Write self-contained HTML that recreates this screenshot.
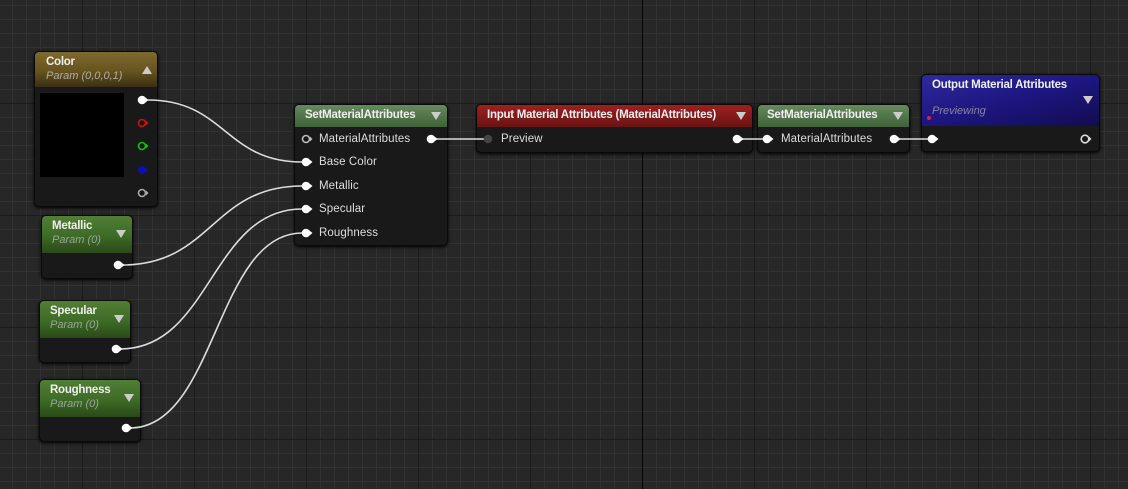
<!DOCTYPE html>
<html><head><meta charset="utf-8"><style>
*{margin:0;padding:0;box-sizing:border-box}
body{width:1128px;height:489px;overflow:hidden;position:relative;font-family:"Liberation Sans",sans-serif;
background-color:#272727;
background-image:
linear-gradient(90deg,transparent 642px,#050505 642px,#050505 643px,transparent 643px),
repeating-linear-gradient(90deg,transparent 0 82px,#1b1b1b 82px 83px,transparent 83px 112px),
repeating-linear-gradient(180deg,transparent 0 103px,#1b1b1b 103px 104px,transparent 104px 112px),
repeating-linear-gradient(90deg,transparent 0 12px,#323232 12px 13px,transparent 13px 14px),
repeating-linear-gradient(180deg,transparent 0 5px,#323232 5px 6px,transparent 6px 14px);}
.n{position:absolute;background:#191919;border-radius:5px;box-shadow:0 1px 3px #000;border:1px solid #0a0a0a;overflow:hidden}
.h{position:absolute;left:0;right:0;top:0;color:#eee;font-weight:bold;font-size:11.5px;letter-spacing:-0.25px;padding:4px 10px}
.sub{font-style:italic;font-weight:normal;opacity:.75;font-size:11px;margin-top:2px;letter-spacing:0}
.tri{position:absolute;width:0;height:0;border-left:5px solid transparent;border-right:5px solid transparent;border-top:8px solid #ccc}
.tx{position:absolute;color:#ddd;font-size:11.5px;letter-spacing:0.1px}
</style></head><body>

<div class="n" style="left:34px;top:51px;width:124px;height:156px">
 <div class="h" style="height:35px;background:linear-gradient(180deg,#7e6a2e,#66531f 55%,#3a3012);padding-left:11px">Color<div class="sub" style="color:#ccc">Param (0,0,0,1)</div></div>
 <div style="position:absolute;top:14px;right:5px;width:0;height:0;border-left:5px solid transparent;border-right:5px solid transparent;border-bottom:8px solid #ccc"></div>
 <div style="position:absolute;left:5px;top:41px;width:84px;height:84px;background:#000"></div>
</div>

<div class="n" style="left:41px;top:215px;width:92px;height:64px">
 <div class="h" style="height:37px;background:linear-gradient(180deg,#527f34,#3d6a26 55%,#2a4a18)">Metallic<div class="sub" style="color:#bbb">Param (0)</div></div>
 <div class="tri" style="right:6px;top:14px"></div></div>
<div class="n" style="left:39px;top:300px;width:92px;height:63px">
 <div class="h" style="height:37px;background:linear-gradient(180deg,#527f34,#3d6a26 55%,#2a4a18)">Specular<div class="sub" style="color:#bbb">Param (0)</div></div>
 <div class="tri" style="right:6px;top:14px"></div></div>
<div class="n" style="left:39px;top:379px;width:102px;height:63px">
 <div class="h" style="height:37px;background:linear-gradient(180deg,#527f34,#3d6a26 55%,#2a4a18)">Roughness<div class="sub" style="color:#bbb">Param (0)</div></div>
 <div class="tri" style="right:6px;top:14px"></div></div>

<div class="n" style="left:294px;top:104px;width:154px;height:142px">
 <div class="h" style="height:22px;background:linear-gradient(180deg,#658a5d,#3f6238);padding-left:10px">SetMaterialAttributes</div>
 <div class="tri" style="right:6px;top:7px"></div>
 <div class="tx" style="left:24px;top:28px">MaterialAttributes</div>
 <div class="tx" style="left:24px;top:51px">Base Color</div>
 <div class="tx" style="left:24px;top:75px">Metallic</div>
 <div class="tx" style="left:24px;top:98px">Specular</div>
 <div class="tx" style="left:24px;top:122px">Roughness</div>
</div>

<div class="n" style="left:476px;top:104px;width:277px;height:49px">
 <div class="h" style="height:22px;background:linear-gradient(180deg,#9e2020,#6a1414);padding-left:10px">Input Material Attributes (MaterialAttributes)</div>
 <div class="tri" style="right:6px;top:7px"></div>
 <div class="tx" style="left:24px;top:28px">Preview</div>
</div>

<div class="n" style="left:757px;top:104px;width:153px;height:49px">
 <div class="h" style="height:22px;background:linear-gradient(180deg,#658a5d,#3f6238);padding-left:9px">SetMaterialAttributes</div>
 <div class="tri" style="right:6px;top:7px"></div>
 <div class="tx" style="left:23px;top:28px">MaterialAttributes</div>
</div>

<div class="n" style="left:921px;top:74px;width:179px;height:78px">
 <div class="h" style="height:51px;background:linear-gradient(165deg,#2e2a9e,#1d1680 50%,#120c50);padding-left:10px">Output Material Attributes<div class="sub" style="color:#aaa;margin-top:14px">Previewing</div></div>
 <div class="tri" style="right:6px;top:21px"></div>
 <div style="position:absolute;left:5px;top:41px;width:4px;height:4px;border-radius:2px;background:#e02040"></div>
</div>

<svg width="1128" height="489" style="position:absolute;left:0;top:0" fill="none">
<g stroke="#ddd" stroke-width="1.6">
<path d="M148 100 C225 100 225 162 302 162"/>
<path d="M122 265 C212 265 212 186 302 186"/>
<path d="M120 349 C211 349 211 209 302 209"/>
<path d="M130 428 C216 428 216 233 302 233"/>
<path d="M436 139 L488 139"/>
<path d="M742 139 L767 139"/>
<path d="M898 139 L932 139"/>
</g>
<defs>
<g id="p"><circle r="4.3" fill="#fff"/><path d="M3.5 -2.5 L6.5 0 L3.5 2.5Z" fill="#fff"/></g>
</defs>
<use href="#p" x="142" y="100"/>
<circle cx="142" cy="123" r="3.5" stroke="#d01010" stroke-width="1.6" fill="#161616"/><path d="M146 120.5 L148.5 123 L146 125.5Z" fill="#d01010"/>
<circle cx="142" cy="146" r="3.5" stroke="#10c010" stroke-width="1.6" fill="#161616"/><path d="M146 143.5 L148.5 146 L146 148.5Z" fill="#10c010"/>
<circle cx="142" cy="170" r="4" fill="#1010b0"/><path d="M145 167.5 L148.5 170 L145 172.5Z" fill="#1010b0"/>
<circle cx="142" cy="193" r="3.5" stroke="#aaa" stroke-width="1.6" fill="#161616"/><path d="M146 190.5 L148.5 193 L146 195.5Z" fill="#aaa"/>
<use href="#p" x="118" y="265"/>
<use href="#p" x="116" y="349"/>
<use href="#p" x="126" y="428"/>
<circle cx="306" cy="139" r="3.5" stroke="#bbb" stroke-width="1.6" fill="#161616"/><path d="M310 136.5 L312.5 139 L310 141.5Z" fill="#bbb"/>
<use href="#p" x="306" y="162"/><use href="#p" x="306" y="186"/><use href="#p" x="306" y="209"/><use href="#p" x="306" y="233"/>
<use href="#p" x="431" y="139"/>
<circle cx="488" cy="139" r="4.3" fill="#444"/>
<use href="#p" x="737" y="139"/>
<use href="#p" x="767" y="139"/>
<use href="#p" x="894" y="139"/>
<use href="#p" x="932" y="139"/>
<circle cx="1085" cy="139" r="3.8" stroke="#ddd" stroke-width="1.6" fill="#161616"/><path d="M1089 136.5 L1091.5 139 L1089 141.5Z" fill="#ddd"/>
</svg>
</body></html>
